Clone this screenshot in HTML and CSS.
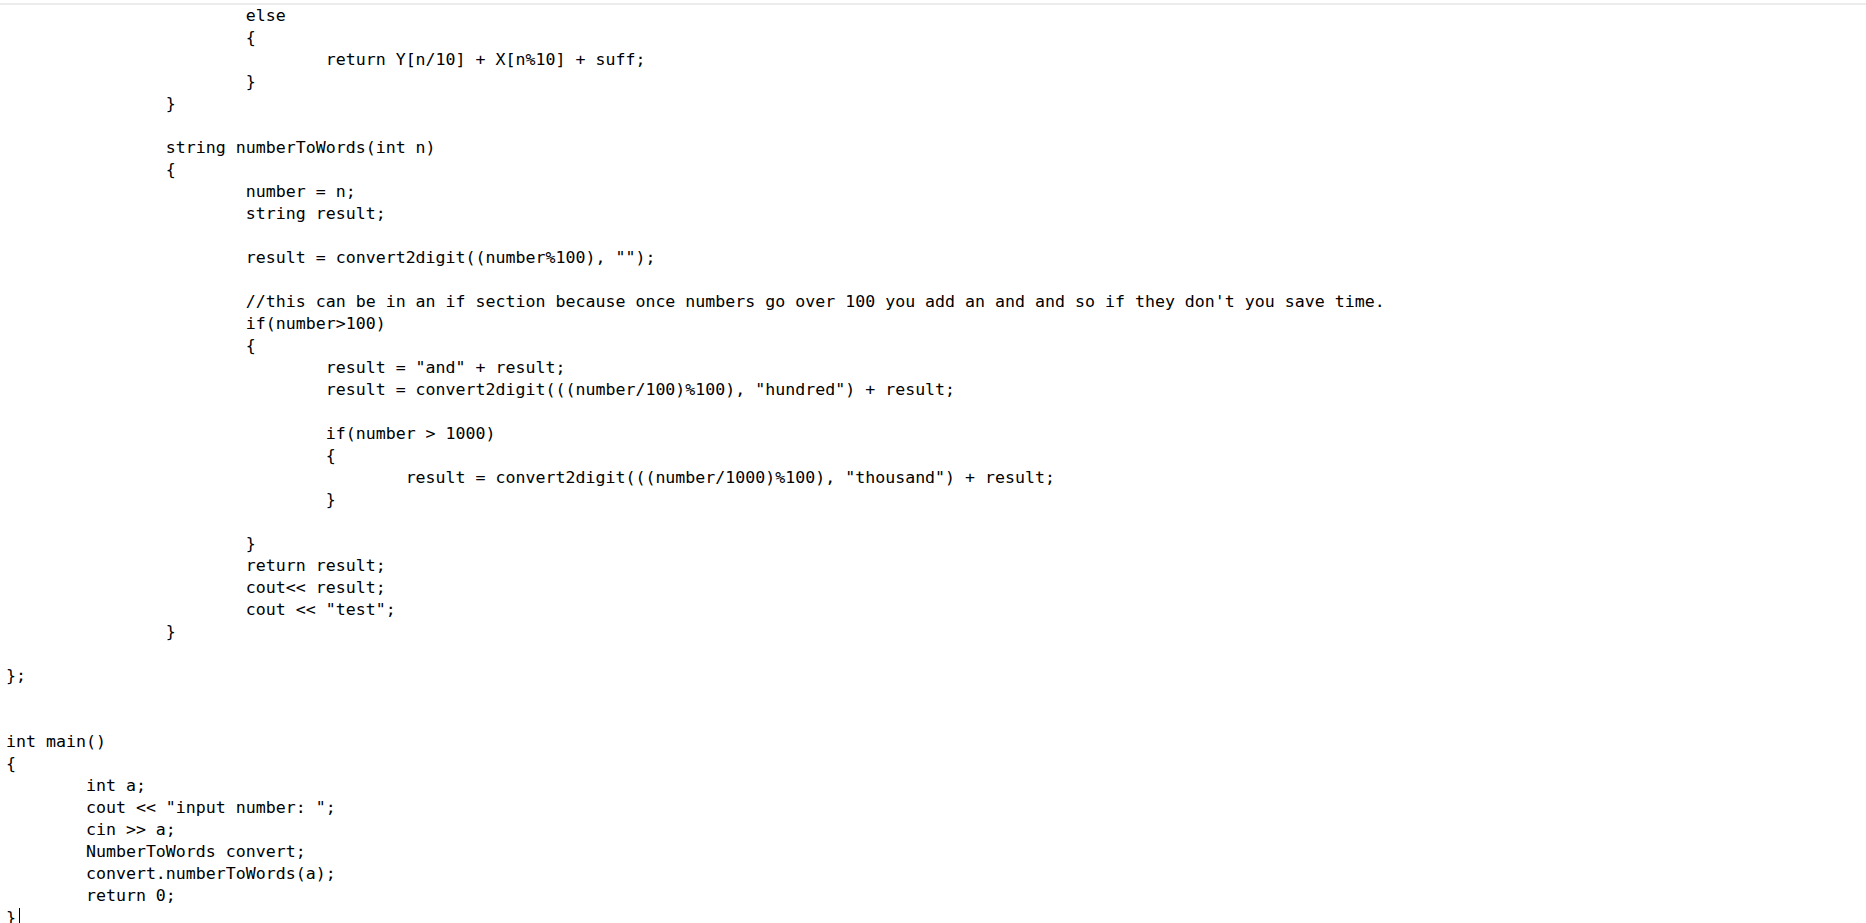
FILE: index.html
```html
<!DOCTYPE html>
<html>
<head>
<meta charset="utf-8">
<link rel="stylesheet" href="styles.css">
</head>
<body>
<div class="edge"></div>
<pre class="code">			else
			{
				return Y[n/10] + X[n%10] + suff;
			}
		}

		string numberToWords(int n)
		{
			number = n;
			string result;

			result = convert2digit((number%100), "");

			//this can be in an if section because once numbers go over 100 you add an and and so if they don't you save time.
			if(number>100)
			{
				result = "and" + result;
				result = convert2digit(((number/100)%100), "hundred") + result;

				if(number > 1000)
				{
					result = convert2digit(((number/1000)%100), "thousand") + result;
				}

			}
			return result;
			cout&lt;&lt; result;
			cout &lt;&lt; "test";
		}

};


int main()
{
	int a;
	cout &lt;&lt; "input number: ";
	cin &gt;&gt; a;
	NumberToWords convert;
	convert.numberToWords(a);
	return 0;
}<span class="caret"></span></pre>
</body>
</html>
```
FILE: styles.css
```css
html, body {
  margin: 0;
  padding: 0;
  background: #ffffff;
  overflow: hidden;
  height: 923px;
}
.edge {
  height: 3px;
  border-bottom: 2px solid #ececec;
}
.code {
  margin: 0;
  padding: 0 0 0 6px;
  font-family: "DejaVu Sans Mono", "Liberation Mono", monospace;
  font-size: 16.6px;
  line-height: 22px;
  color: #000000;
  tab-size: 8;
  -moz-tab-size: 8;
  white-space: pre;
}
.caret {
  display: inline-block;
  width: 1px;
  height: 19px;
  margin-left: 3px;
  background: #000000;
  vertical-align: -4px;
}
```
